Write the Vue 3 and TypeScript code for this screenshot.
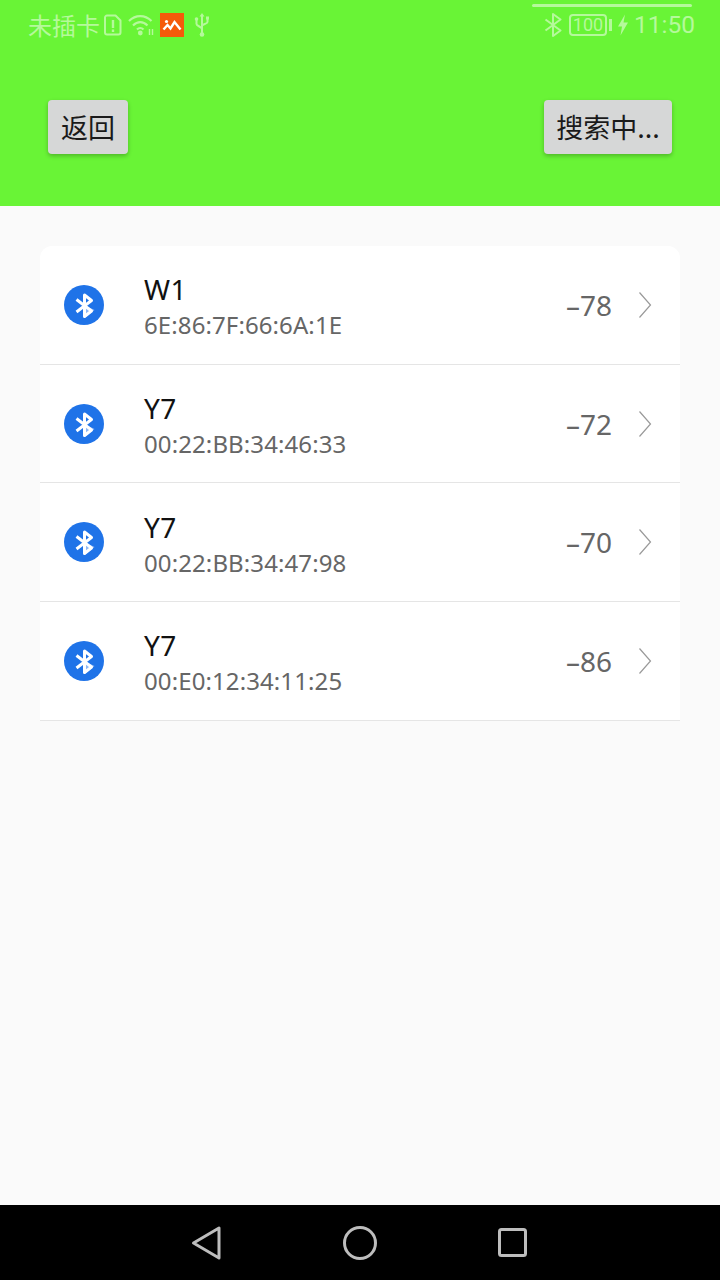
<template>
  <div class="page">
    <header class="top">
      <div class="status">
        <div class="status-left">
          <span class="carrier">未插卡</span>
          <svg class="sim" width="18" height="22" viewBox="0 0 18 22" fill="none">
            <path d="M3 1.500h8.500l5 5v12a2 2 0 0 1-2 2h-11.500a2 2 0 0 1-2-2v-15a2 2 0 0 1 2-2z" stroke-width="2" stroke-linejoin="round" />
            <path d="M9 6v8M9 15.500v2.500" stroke-width="2.400" />
          </svg>
          <svg class="wifi" width="27" height="22" viewBox="0 0 27 22" fill="none">
            <path d="M1 7c6.500-6.500 16-6.500 22.500 0M5 11.500c4.500-4.500 10-4.500 14.500 0M9 15.500c2-2 4.500-2 6.500 0" stroke-width="2.200" />
            <circle cx="12.300" cy="19" r="2.400" class="fill" />
            <path d="M21.500 15v6M24.500 15v6" stroke-width="1.400" />
          </svg>
          <span class="mi">
            <svg width="24" height="24" viewBox="0 0 24 24" fill="none">
              <circle cx="6.500" cy="8.500" r="1.600" fill="#fff" />
              <path d="M3.500 16.500l4-4.500 3 3.500 4-6.500 6 7.500" stroke="#fff" stroke-width="2.400" />
            </svg>
          </span>
          <svg class="usb" width="16" height="24" viewBox="0 0 16 24" fill="none">
            <path d="M8 3v18M2.500 7v4c0 2 5.500 3 5.500 5M13.500 6v3c0 2-5.500 2-5.500 4" stroke-width="2" />
            <path d="M8 0l2.500 3.500h-5z" class="fill" />
            <circle cx="2.500" cy="6" r="1.800" class="fill" />
            <rect x="12" y="3.500" width="3" height="3" class="fill" />
            <circle cx="8" cy="21.500" r="2.300" class="fill" />
          </svg>
        </div>
        <div class="status-right">
          <svg class="bt" width="18" height="24" viewBox="0 0 18 24" fill="none">
            <path d="M1.500 6.500l15 11-7.500 5.500V1l7.500 5.500-15 11" stroke-width="2" stroke-linejoin="round" />
          </svg>
          <span class="battery"><span class="battery-text">100</span></span>
          <span class="battery-cap"></span>
          <svg class="bolt" width="12" height="22" viewBox="0 0 12 22">
            <path d="M8 0.500L1 12.500h4L3.500 21.500 11 8.500H6.500z" class="fill" />
          </svg>
          <span class="time">11:50</span>
        </div>
        <span class="loading-line"></span>
      </div>
      <div class="actions">
        <button class="btn btn-back">返回</button>
        <button class="btn btn-search">搜索中...</button>
      </div>
    </header>

    <main class="content">
      <ul class="list">
        <li v-for="d in devices" :key="d.mac" class="row">
          <span class="bt-icon">
            <svg width="40" height="40" viewBox="0 0 40 40" fill="none">
              <path d="M21 20.500l9.500 4.500-9.500 8z" fill="#8fb8f5" />
              <path d="M12.500 14.500l15 11.500-7 5.500V10l7 5.500-15 11.500" stroke="#fff" stroke-width="3" stroke-linejoin="round" />
            </svg>
          </span>
          <div class="info">
            <div class="name">{{ d.name }}</div>
            <div class="mac">{{ d.mac }}</div>
          </div>
          <span class="rssi">{{ d.rssi }}</span>
          <svg class="chevron" width="14" height="28" viewBox="0 0 14 28" fill="none">
            <path d="M1.500 1.500L12.500 14 1.500 26.500" stroke="#999" stroke-width="1.200" />
          </svg>
        </li>
      </ul>
    </main>

    <nav class="nav">
      <svg width="32" height="36" viewBox="0 0 32 36" fill="none">
        <path d="M28 3v30L2.500 18z" stroke="#bdbdbd" stroke-width="3" stroke-linejoin="round" />
      </svg>
      <svg width="34" height="34" viewBox="0 0 34 34" fill="none">
        <circle cx="17" cy="17" r="15.500" stroke="#bdbdbd" stroke-width="3" />
      </svg>
      <svg width="32" height="32" viewBox="0 0 32 32" fill="none">
        <rect x="2.500" y="2.500" width="26" height="26" rx="2" stroke="#bdbdbd" stroke-width="3" />
      </svg>
    </nav>
  </div>
</template>

<script setup lang="ts">
interface Device {
  name: string;
  mac: string;
  rssi: string;
}

const devices: Device[] = [
  { name: "W1", mac: "6E:86:7F:66:6A:1E", rssi: "–78" },
  { name: "Y7", mac: "00:22:BB:34:46:33", rssi: "–72" },
  { name: "Y7", mac: "00:22:BB:34:47:98", rssi: "–70" },
  { name: "Y7", mac: "00:E0:12:34:11:25", rssi: "–86" },
];
</script>

<style>
html,
body {
  margin: 0;
  background: #fafafa;
}
</style>

<style scoped>
.page {
  width: 720px;
  height: 1280px;
  display: flex;
  flex-direction: column;
  font-family: "Noto Sans", "Noto Sans CJK SC", sans-serif;
  overflow: hidden;
}

.top {
  height: 206px;
  background: #69f436;
  flex: none;
}

.status {
  position: relative;
  height: 50px;
  display: flex;
  justify-content: space-between;
  align-items: center;
  padding: 0 25px 0 28px;
  color: #b5f99b;
}

.status svg {
  stroke: #b5f99b;
}

.status svg .fill {
  fill: #b5f99b;
  stroke: none;
}

.status .mi svg {
  stroke: none;
}

.status-left,
.status-right {
  display: flex;
  align-items: center;
}

.carrier {
  font-size: 24px;
  line-height: 50px;
  font-family: "Noto Sans CJK SC", sans-serif;
  width: 76px;
  white-space: nowrap;
}

.wifi {
  margin-left: 6px;
}

.mi {
  width: 24px;
  height: 24px;
  margin-left: 5px;
  background: #f55a0a;
  display: block;
}

.mi svg {
  display: block;
}

.usb {
  margin-left: 10px;
}

.battery {
  box-sizing: border-box;
  width: 38px;
  height: 22px;
  border: 2px solid #b5f99b;
  border-radius: 4px;
  margin-left: 7px;
  display: flex;
  align-items: center;
  justify-content: center;
}

.battery-text {
  font-size: 18px;
  line-height: 18px;
  font-family: Roboto, sans-serif;
}

.battery-cap {
  width: 3px;
  height: 12px;
  background: #b5f99b;
  margin-left: 2px;
}

.bolt {
  margin-left: 5px;
}

.time {
  font-size: 24.500px;
  line-height: 50px;
  margin-left: 5px;
  font-family: Roboto, sans-serif;
}

.loading-line {
  position: absolute;
  left: 532px;
  top: 4px;
  width: 160px;
  height: 3px;
  border-radius: 2px;
  background: #b5f99b;
}

.actions {
  display: flex;
  justify-content: space-between;
  padding: 50px 48px 0;
}

.btn {
  height: 54px;
  border: none;
  border-radius: 4px;
  background: #d6d7d7;
  box-shadow: 0 2px 4px rgba(0, 0, 0, 0.25);
  color: #1a1a1a;
  font-size: 27px;
  font-family: "Noto Sans CJK SC", sans-serif;
  padding: 0 0 2px;
}

.btn-back {
  width: 80px;
}

.btn-search {
  width: 128px;
}

.content {
  flex: 1;
  background: #fafafa;
  padding: 40px 40px 0;
}

.list {
  list-style: none;
  margin: 0;
  padding: 0;
}

.row {
  box-sizing: border-box;
  height: 118.700px;
  display: flex;
  align-items: center;
  background: #fff;
  border-bottom: 1px solid #e5e5e5;
  padding: 0 28px 0 24px;
}

.row:first-child {
  border-radius: 12px 12px 0 0;
}

.bt-icon {
  width: 40px;
  height: 40px;
  border-radius: 50%;
  background: #1f73e8;
  flex: none;
}

.bt-icon svg {
  display: block;
}

.info {
  margin-left: 40px;
  padding-top: 3px;
  flex: 1;
}

.name {
  font-size: 28px;
  line-height: 34px;
  letter-spacing: 0.5px;
  color: #111;
}

.mac {
  font-size: 24px;
  line-height: 30px;
  letter-spacing: 0.1px;
  margin-top: 4px;
  color: #666;
}

.rssi {
  font-size: 28px;
  color: #666;
  margin-right: 26px;
}

.nav {
  height: 75px;
  flex: none;
  background: #000;
  display: flex;
  align-items: center;
  justify-content: center;
  gap: 120px;
}
</style>
